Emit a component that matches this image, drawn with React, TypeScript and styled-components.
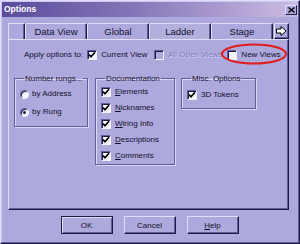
import React from "react";
import styled, { createGlobalStyle } from "styled-components";

const BG = "#aea9dc";
const TEXT = "#12102e";
const DARK = "#625c9c";
const DARKER = "#1e1b44";
const LIGHT = "#e0dcfa";

const GlobalStyle = createGlobalStyle`
  html, body { margin: 0; padding: 0; background: ${BG}; }
  body {
    width: 300px; height: 244px; overflow: hidden;
    font-family: "Liberation Sans", Arial, sans-serif;
    color: ${TEXT};
  }
`;

const Dialog = styled.div`
  position: relative;
  box-sizing: border-box;
  width: 300px;
  height: 244px;
  background: ${BG};
  border: 1px solid;
  border-color: ${LIGHT} ${DARKER} ${DARKER} ${LIGHT};
  box-shadow: inset -1px -1px 0 ${DARK}, inset 1px 1px 0 #cdc9f0;
  padding: 1px;
  display: flex;
  flex-direction: column;
`;

const TitleBar = styled.div`
  height: 15px;
  display: flex;
  align-items: center;
  justify-content: space-between;
  padding: 0 1px 0 2px;
  background: linear-gradient(90deg, #5a4b9c 0%, #8676b8 45%, #cbbce4 100%);
`;

const Title = styled.span`
  color: #ffffff;
  font-weight: bold;
  font-size: 8.5px;
  line-height: 15px;
`;

const CloseButton = styled.div`
  box-sizing: border-box;
  width: 12px;
  height: 10px;
  background: ${BG};
  border: 1px solid;
  border-color: ${LIGHT} ${DARKER} ${DARKER} ${LIGHT};
  display: flex;
  align-items: center;
  justify-content: center;
  margin-top: 1px;
`;

const Body = styled.div`
  padding: 6px 0 0 6px;
  display: flex;
  flex-direction: column;
`;

const TabRow = styled.div`
  display: flex;
  align-items: flex-end;
  height: 16px;
  width: 281px;
`;

const Tab = styled.div<{ $w: number; $partial?: boolean; $active?: boolean }>`
  box-sizing: border-box;
  width: ${(p) => p.$w}px;
  height: 16px;
  background: ${(p) => (p.$active ? "#b2afdc" : BG)};
  border-top: 1px solid ${LIGHT};
  border-left: ${(p) => (p.$partial ? "1px solid " + LIGHT : "1px solid " + LIGHT)};
  border-right: 1px solid ${DARKER};
  box-shadow: inset -1px 0 0 ${DARK};
  border-radius: ${(p) => (p.$partial ? "0 2px 0 0" : "2px 2px 0 0")};
  font-size: 9.5px;
  line-height: 15px;
  text-align: center;
  white-space: nowrap;
`;

const ScrollButton = styled.div`
  box-sizing: border-box;
  width: 15px;
  height: 16px;
  margin-left: 1px;
  background: ${BG};
  border: 1px solid;
  border-color: ${LIGHT} ${DARKER} ${DARKER} ${LIGHT};
  box-shadow: inset -1px -1px 0 ${DARK};
  display: flex;
  align-items: center;
  justify-content: center;
`;

const Panel = styled.div`
  box-sizing: border-box;
  width: 281px;
  height: 171px;
  margin-top: 0;
  border: 1px solid;
  border-color: ${LIGHT} ${DARKER} ${DARKER} ${LIGHT};
  box-shadow: inset -1px -1px 0 ${DARK};
  padding: 10px 0 0 5px;
  display: flex;
  flex-direction: column;
`;

const ApplyRow = styled.div`
  display: flex;
  align-items: center;
  height: 10px;
  margin-left: 10px;
  font-size: 8px;
  white-space: nowrap;
`;

const Text = styled.span<{ $disabled?: boolean }>`
  font-size: 8px;
  line-height: 10px;
  white-space: nowrap;
  color: ${(p) => (p.$disabled ? "#7f7ab2" : TEXT)};
  text-shadow: ${(p) => (p.$disabled ? "1px 1px 0 #d6d2f4" : "none")};
`;

const Option = styled.label<{ $ml?: number }>`
  display: flex;
  align-items: center;
  gap: 4px;
  margin-left: ${(p) => p.$ml ?? 0}px;
  height: 10px;
`;

const Box = styled.span<{ $disabled?: boolean }>`
  box-sizing: border-box;
  width: 10px;
  height: 10px;
  flex: none;
  background: ${(p) => (p.$disabled ? BG : "#f6f6ff")};
  border: 1px solid;
  border-color: ${DARK} #f4f2ff #f4f2ff ${DARK};
  box-shadow: inset 1px 1px 0 ${DARKER};
  display: flex;
  align-items: center;
  justify-content: center;
`;

const Radio = styled.span`
  box-sizing: border-box;
  width: 9px;
  height: 9px;
  flex: none;
  border-radius: 50%;
  background: #f6f6ff;
  border: 1px solid;
  border-color: ${DARK} #f4f2ff #f4f2ff ${DARK};
  box-shadow: inset 1px 1px 0 ${DARKER};
  display: flex;
  align-items: center;
  justify-content: center;
`;

const Dot = styled.span`
  width: 3px;
  height: 3px;
  border-radius: 50%;
  background: ${DARKER};
`;

const GroupRow = styled.div`
  display: flex;
  align-items: flex-start;
  margin-top: 14px;
`;

const Group = styled.fieldset<{ $w: number; $ml?: number; $pt: number; $pb: number; $gap: number }>`
  box-sizing: border-box;
  width: ${(p) => p.$w}px;
  margin: 0 0 0 ${(p) => p.$ml ?? 0}px;
  padding: ${(p) => p.$pt}px 0 ${(p) => p.$pb}px 5px;
  border: 1px solid ${DARK};
  box-shadow: inset 1px 1px 0 #dcd8f8, 1px 1px 0 #dcd8f8;
  display: flex;
  flex-direction: column;
  gap: ${(p) => p.$gap}px;
  min-width: 0;
`;

const Legend = styled.legend`
  font-size: 8px;
  line-height: 9px;
  padding: 0 1px;
  margin-left: 4px;
  white-space: nowrap;
`;

const Row = styled.label<{ $gap?: number }>`
  display: flex;
  align-items: center;
  gap: ${(p) => p.$gap ?? 4}px;
  height: 10px;
`;

const ButtonRow = styled.div`
  display: flex;
  justify-content: center;
  gap: 11px;
  margin-top: 6px;
  padding-right: 1px;
`;

const Button = styled.div<{ $default?: boolean }>`
  box-sizing: border-box;
  width: 52px;
  height: 18px;
  background: ${BG};
  border: 1px solid;
  border-color: ${(p) => (p.$default ? DARKER : LIGHT)} ${DARKER} ${DARKER}
    ${(p) => (p.$default ? DARKER : LIGHT)};
  box-shadow: ${(p) =>
    p.$default
      ? `inset 1px 1px 0 ${LIGHT}, inset -1px -1px 0 ${DARK}`
      : `inset -1px -1px 0 ${DARK}`};
  font-size: 8px;
  display: flex;
  align-items: center;
  justify-content: center;
`;

const Accel = styled.span`
  text-decoration: underline;
`;

const Annotation = styled.svg`
  position: absolute;
  left: 220px;
  top: 41px;
  pointer-events: none;
`;

const Check = () => (
  <svg width="8" height="8" viewBox="0 0 8 8">
    <path d="M1 3.6 L3 5.8 L7 1.2" fill="none" stroke="#000" strokeWidth="1.7" />
  </svg>
);

const CheckItem = ({ label, accel, rest }: { label?: string; accel: string; rest: string }) => (
  <Row>
    <Box>
      <Check />
    </Box>
    <Text>
      {label}
      <Accel>{accel}</Accel>
      {rest}
    </Text>
  </Row>
);

export default function App() {
  return (
    <>
      <GlobalStyle />
      <Dialog>
        <TitleBar>
          <Title>Options</Title>
          <CloseButton>
            <svg width="7" height="6" viewBox="0 0 7 6">
              <path d="M0.5 0.5 L6.5 5.5 M6.5 0.5 L0.5 5.5" stroke="#000" strokeWidth="1.4" />
            </svg>
          </CloseButton>
        </TitleBar>
        <Body>
          <TabRow>
            <Tab $w={17} $partial />
            <Tab $w={62}>Data View</Tab>
            <Tab $w={62}>Global</Tab>
            <Tab $w={62} $active>
              Ladder
            </Tab>
            <Tab $w={62}>Stage</Tab>
            <ScrollButton>
              <svg width="11" height="10" viewBox="0 0 11 10">
                <polygon
                  points="0.5,3 5,3 5,0.5 10,5 5,9.5 5,7 0.5,7"
                  fill="#fff"
                  stroke="#000"
                  strokeWidth="1"
                />
              </svg>
            </ScrollButton>
          </TabRow>
          <Panel>
            <ApplyRow>
              <Text>Apply options to:</Text>
              <Option $ml={4}>
                <Box>
                  <Check />
                </Box>
                <Text>Current View</Text>
              </Option>
              <Option $ml={7}>
                <Box $disabled />
                <Text $disabled>All Open Views</Text>
              </Option>
              <Option $ml={5}>
                <Box />
                <Text>New Views</Text>
              </Option>
            </ApplyRow>
            <GroupRow>
              <Group $w={74} $pt={6} $pb={9} $gap={8}>
                <Legend>Number rungs...</Legend>
                <Row $gap={3}>
                  <Radio />
                  <Text>by Address</Text>
                </Row>
                <Row $gap={3}>
                  <Radio>
                    <Dot />
                  </Radio>
                  <Text>by Rung</Text>
                </Row>
              </Group>
              <Group $w={80} $ml={7} $pt={4} $pb={3} $gap={6}>
                <Legend>Documentation</Legend>
                <CheckItem accel="E" rest="lements" />
                <CheckItem accel="N" rest="icknames" />
                <CheckItem accel="W" rest="iring Info" />
                <CheckItem accel="D" rest="escriptions" />
                <CheckItem accel="C" rest="omments" />
              </Group>
              <Group $w={75} $ml={6} $pt={7} $pb={8} $gap={0}>
                <Legend>Misc. Options</Legend>
                <Row>
                  <Box>
                    <Check />
                  </Box>
                  <Text>3D Tokens</Text>
                </Row>
              </Group>
            </GroupRow>
          </Panel>
        </Body>
        <ButtonRow>
          <Button $default>OK</Button>
          <Button>Cancel</Button>
          <Button>
            <span>
              <Accel>H</Accel>elp
            </span>
          </Button>
        </ButtonRow>
        <Annotation width="68" height="24" viewBox="0 0 68 24">
          <ellipse cx="33" cy="12" rx="32" ry="9.5" fill="none" stroke="#e01c1c" strokeWidth="2" />
        </Annotation>
      </Dialog>
    </>
  );
}
